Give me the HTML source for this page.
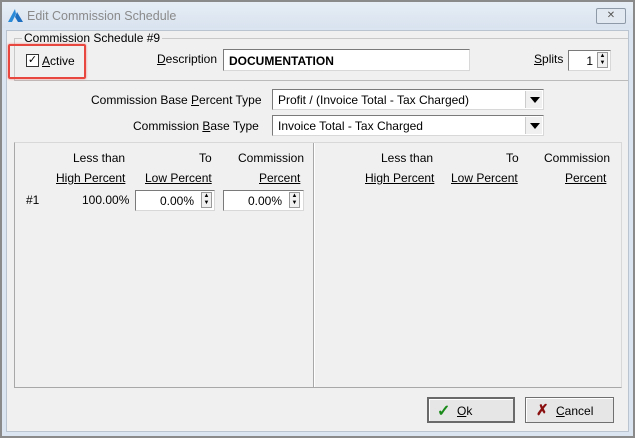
<!DOCTYPE html>
<html><head><style>
*{margin:0;padding:0;box-sizing:border-box}
body{width:635px;height:438px;overflow:hidden;background:#f0f0f0;font-family:"Liberation Sans",sans-serif;font-size:12px;color:#000;position:relative}
.a{position:absolute;white-space:nowrap}
.frame{position:absolute;left:0;top:0;width:635px;height:438px;border:2px solid #8a8a8a;background:#dbe5f1}
.title{position:absolute;left:2px;top:2px;width:631px;height:26px;background:linear-gradient(#e6edf5,#d9e3ef)}
.client{position:absolute;left:6px;top:30px;width:623px;height:402px;background:#f0f0f0;border:1px solid #b9c4d0}
.inp{position:absolute;background:#fff;border:1px solid #7a7a7a;border-right-color:#d8d8d8;border-bottom-color:#d8d8d8}
.u{text-decoration:underline}
.spin{position:absolute;width:11px;height:16px;border:1px solid #9a9a9a;background:#f0f0f0;font-size:6px;line-height:7px;text-align:center}
.btn{position:absolute;height:26px;border:1px solid #707070;background:#e6e6e6;box-shadow:inset 1px 1px 0 #fff}
.dd{position:absolute;right:1px;top:1px;width:17px;height:17px;background:#f0f0f0;border-left:1px solid #ccc}
.dd:after{content:"";position:absolute;left:4px;top:6px;border-left:5px solid transparent;border-right:5px solid transparent;border-top:6px solid #000}
</style></head><body>
<div class="frame"></div>
<div class="title"></div>
<svg class="a" style="left:8px;top:9px" width="16" height="14" viewBox="0 0 16 14"><path d="M7 0 L0 13 L4 13 L8 5 Z" fill="#2a8ad8"/><path d="M9 3 L15 13 L10 13 L7 8 Z" fill="#1e6fc0"/></svg>
<div class="a" style="left:27px;top:9px;color:#8a8a8a;font-size:12.5px">Edit Commission Schedule</div>
<div class="a" style="left:596px;top:8px;width:30px;height:16px;border:1px solid #8f9aa8;border-radius:2px;background:#e3e9f0;color:#555;font-size:10px;text-align:center;line-height:14px">✕</div>
<div class="client"></div>
<div class="a" style="left:14px;top:38px;width:614px;height:43px;border-top:1px solid #c8c8c8;border-left:1px solid #c8c8c8;border-bottom:1px solid #bbb"></div>
<div class="a" style="left:22px;top:31px;background:#f0f0f0;padding:0 2px">Commission Schedule #9</div>
<div class="a" style="left:8px;top:44px;width:78px;height:35px;border:2px solid #e8473f;border-radius:2px;box-shadow:0 0 2px #e88"></div>
<div class="a" style="left:26px;top:54px;width:13px;height:13px;border:1px solid #333;background:#fff;font-size:11px;line-height:11px;text-align:center">✓</div>
<div class="a" style="left:42px;top:54px"><span class="u">A</span>ctive</div>
<div class="a" style="left:157px;top:52px"><span class="u">D</span>escription</div>
<div class="inp" style="left:223px;top:49px;width:247px;height:22px;font-weight:bold;padding:4px 5px">DOCUMENTATION</div>
<div class="a" style="left:534px;top:52px"><span class="u">S</span>plits</div>
<div class="inp" style="left:568px;top:50px;width:43px;height:21px;text-align:right;padding:3px 17px 0 0">1</div>
<div class="spin" style="left:597px;top:52px">▲<br>▼</div>
<div class="a" style="left:91px;top:93px">Commission Base <span class="u">P</span>ercent Type</div>
<div class="inp" style="left:272px;top:89px;width:272px;height:21px;padding:3px 5px">Profit / (Invoice Total - Tax Charged)<div class="dd"></div></div>
<div class="a" style="left:133px;top:119px">Commission <span class="u">B</span>ase Type</div>
<div class="inp" style="left:272px;top:115px;width:272px;height:21px;padding:3px 5px">Invoice Total - Tax Charged<div class="dd"></div></div>
<div class="a" style="left:14px;top:142px;width:608px;height:246px;border:1px solid #a8a8a8;border-right-color:#d8d8d8;border-top-color:#d8d8d8"></div>
<div class="a" style="left:313px;top:143px;width:1px;height:244px;background:#a8a8a8"></div>
<div class="a" style="left:314px;top:143px;width:1px;height:244px;background:#fff"></div>
<div class="a" style="left:73px;top:151px">Less than</div>
<div class="a u" style="left:56px;top:171px">High Percent</div>
<div class="a" style="left:199px;top:151px">To</div>
<div class="a u" style="left:145px;top:171px">Low Percent</div>
<div class="a" style="left:238px;top:151px">Commission</div>
<div class="a u" style="left:259px;top:171px">Percent</div>
<div class="a" style="left:26px;top:193px">#1</div>
<div class="a" style="left:82px;top:193px">100.00%</div>
<div class="inp" style="left:135px;top:190px;width:80px;height:21px;text-align:right;padding:3px 20px 0 0">0.00%</div>
<div class="spin" style="left:201px;top:192px">▲<br>▼</div>
<div class="inp" style="left:223px;top:190px;width:81px;height:21px;text-align:right;padding:3px 21px 0 0">0.00%</div>
<div class="spin" style="left:289px;top:192px">▲<br>▼</div>
<div class="a" style="left:381px;top:151px">Less than</div>
<div class="a u" style="left:365px;top:171px">High Percent</div>
<div class="a" style="left:506px;top:151px">To</div>
<div class="a u" style="left:451px;top:171px">Low Percent</div>
<div class="a" style="left:544px;top:151px">Commission</div>
<div class="a u" style="left:565px;top:171px">Percent</div>
<div class="btn" style="left:427px;top:397px;width:88px;border:2px solid #6a6a6a"><span class="a" style="left:8px;top:2px;color:#1a8a1a;font-size:16px;font-weight:bold">✓</span><span class="a" style="left:28px;top:5px"><span class="u">O</span>k</span></div>
<div class="btn" style="left:525px;top:397px;width:89px"><span class="a" style="left:10px;top:3px;color:#8a1010;font-size:15px;font-weight:bold">✗</span><span class="a" style="left:30px;top:6px"><span class="u">C</span>ancel</span></div>
</body></html>
